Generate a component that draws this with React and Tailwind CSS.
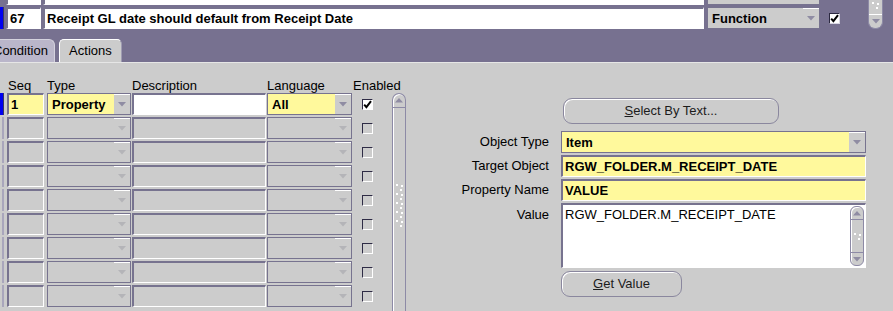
import React from 'react';

function Arrow({ light }) {
  return (
    <svg width="8" height="5" viewBox="0 0 8 5">
      <polygon points="0,0 8,0 4,4.5" fill={light ? '#b4b4b8' : '#8f8ca3'} />
    </svg>
  );
}

function Check() {
  return (
    <svg width="9" height="9" viewBox="0 0 9 9">
      <path d="M1.2 4.6 L3.4 7.2 L8 1.2" stroke="#000" strokeWidth="2" fill="none" />
    </svg>
  );
}

function TextField({ w, tone = 'gray', bold, children }) {
  const bg = tone === 'yellow' ? 'bg-[#fff99c]' : tone === 'white' ? 'bg-white' : 'bg-[#cccccc]';
  return (
    <div
      className={`${w} ${bg} h-[22px] shrink-0 border-t-2 border-l-2 border-b border-r border-t-[#77738f] border-l-[#77738f] border-b-white border-r-white flex items-center pl-[2px] text-[13px] leading-none text-black overflow-hidden whitespace-nowrap ${bold ? 'font-bold' : ''}`}
    >
      {children}
    </div>
  );
}

function Dropdown({ w, tone = 'gray', bold, children, light }) {
  const bg = tone === 'yellow' ? 'bg-[#fff99c]' : 'bg-[#cccccc]';
  return (
    <div
      className={`${w} h-[22px] shrink-0 flex border border-[#77738f] shadow-[inset_1px_1px_0_#ffffff] bg-[#cccccc] overflow-hidden`}
    >
      <div className={`flex-1 ${bg} flex items-center pl-[4px] text-[13px] leading-none text-black whitespace-nowrap ${bold ? 'font-bold' : ''}`}>
        {children}
      </div>
      <div className="w-[16px] flex items-center justify-center">
        <Arrow light={light} />
      </div>
    </div>
  );
}

function CheckBox({ checked, onPurple }) {
  return (
    <div
      className={`w-[11px] h-[11px] shrink-0 flex items-center justify-center border-t border-l border-b border-r ${
        onPurple
          ? 'border-t-[#2b2840] border-l-[#2b2840] border-b-[#d8d6e2] border-r-[#d8d6e2] bg-white'
          : 'border-t-[#2e2b45] border-l-[#2e2b45] border-b-white border-r-white ' + (checked ? 'bg-white' : 'bg-[#cccccc]')
      }`}
    >
      {checked && <Check />}
    </div>
  );
}

function GripDots({ count }) {
  return (
    <div className="flex flex-col gap-[2px] items-center">
      {Array.from({ length: count }).map((_, i) => (
        <div key={i} className="flex gap-[3px]">
          <div className={`w-[2px] h-[2px] bg-white ${i % 2 ? 'ml-[3px]' : ''}`} />
          {i % 2 === 0 && <div className="w-[2px] h-[2px] bg-white mt-[1px]" />}
        </div>
      ))}
    </div>
  );
}

function Button({ w, children }) {
  return (
    <div
      className={`${w} h-[26px] rounded-[9px] border border-[#8a879e] shadow-[inset_1px_1px_0_#ffffff] bg-[#cccccc] flex items-center justify-center text-[13px] text-[#1c1c1c]`}
    >
      {children}
    </div>
  );
}

const emptyRows = Array.from({ length: 8 });

export default function App() {
  return (
    <div
      className="w-[893px] h-[311px] overflow-hidden bg-[#cccccc] select-none"
      style={{ fontFamily: '"Liberation Sans", Arial, sans-serif' }}
    >
      {/* header block: rule rows + tabs */}
      <div className="h-[62px] bg-[#777190] flex flex-col">
        <div className="h-[30px] flex overflow-hidden">
          <div className="w-[840px] flex flex-col gap-[2px] -mt-[17px]">
            {/* previous row, scrolled off */}
            <div className="flex items-center h-[22px]">
              <div className="w-[4px] h-[22px]" />
              <div className="ml-[2px]"><TextField w="w-[35px]" tone="white" /></div>
              <div className="ml-[2px]"><TextField w="w-[661px]" tone="white" /></div>
              <div className="ml-[3px]"><Dropdown w="w-[113px]" /></div>
            </div>
            <div className="flex items-center h-[22px]">
              <div className="w-[4px] h-[22px] bg-[#0000f0] border-r border-[#3a3660]" />
              <div className="ml-[2px]"><TextField w="w-[35px]" tone="white" bold>67</TextField></div>
              <div className="ml-[2px]">
                <TextField w="w-[661px]" tone="white" bold>Receipt GL date should default from Receipt Date</TextField>
              </div>
              <div className="ml-[3px]"><Dropdown w="w-[113px]" bold>Function</Dropdown></div>
              <div className="ml-[9px]"><CheckBox checked onPurple /></div>
            </div>
          </div>
          <div className="ml-[28px] w-[15px] h-[29px] border-l border-r border-b border-[#8d8aa6] rounded-b-[7px] bg-[#cccccc] flex flex-col">
            <div className="h-[14px] flex items-start justify-center pt-[2px]">
              <GripDots count={2} />
            </div>
            <div className="flex-1 border-t border-white flex items-center justify-center">
              <Arrow />
            </div>
          </div>
        </div>
        <div className="mt-[9px] flex items-end h-[23px]">
          <div className="-ml-[11px] h-[23px] pl-[4px] pr-[6px] bg-[#bab6ca] rounded-tr-[6px] border-t border-r border-[#d4d2de] flex items-center text-[13px] text-black">
            Condition
          </div>
          <div className="ml-[4px] h-[23px] w-[63px] bg-[#cccccc] rounded-t-[5px] border-t border-l border-white border-r border-r-[#9f9cb2] flex items-center justify-center text-[13px] text-black">
            Actions
          </div>
        </div>
      </div>

      {/* tab body */}
      <div className="h-[249px] border-t border-[#e6e6e6] flex">
        {/* actions multi-row grid */}
        <div className="w-[406px] flex flex-col pt-[16px]">
          <div className="flex h-[15px] items-center text-[13px] text-black leading-none">
            <div className="w-[4px]" />
            <div className="ml-[4px] w-[36px]">Seq</div>
            <div className="ml-[3px] w-[84px]">Type</div>
            <div className="ml-[1px] w-[134px]">Description</div>
            <div className="ml-[1px] w-[85px]">Language</div>
            <div className="ml-[1px]">Enabled</div>
          </div>
          <div className="mt-[1px] flex flex-1">
            <div className="w-[373px] flex flex-col gap-[2px]">
              <div className="flex items-center h-[22px]">
                <div className="w-[4px] h-[22px] bg-[#0000f0] border-r border-[#3a3660]" />
                <div className="ml-[3px]"><TextField w="w-[37px]" tone="yellow" bold>1</TextField></div>
                <div className="ml-[3px]"><Dropdown w="w-[84px]" tone="yellow" bold>Property</Dropdown></div>
                <div className="ml-[1px]"><TextField w="w-[134px]" tone="white" /></div>
                <div className="ml-[1px]"><Dropdown w="w-[85px]" tone="yellow" bold>All</Dropdown></div>
                <div className="ml-[10px]"><CheckBox checked /></div>
              </div>
              {emptyRows.map((_, i) => (
                <div key={i} className="flex items-center h-[22px]">
                  <div className="w-[4px] h-[22px] border-r-2 border-[#a9a6bc]" />
                  <div className="ml-[3px]"><TextField w="w-[37px]" /></div>
                  <div className="ml-[3px]"><Dropdown w="w-[84px]" light /></div>
                  <div className="ml-[1px]"><TextField w="w-[134px]" /></div>
                  <div className="ml-[1px]"><Dropdown w="w-[85px]" light /></div>
                  <div className="ml-[10px]"><CheckBox /></div>
                </div>
              ))}
            </div>
            <div className="ml-[19px] w-[14px] h-[230px] border border-b-0 border-[#8d8aa6] rounded-t-[7px] shadow-[inset_1px_1px_0_#ffffff] flex flex-col">
              <div className="h-[14px] border-b border-[#8d8aa6] flex items-center justify-center">
                <svg width="8" height="5" viewBox="0 0 8 5">
                  <polygon points="0,4.5 8,4.5 4,0" fill="#8f8ca3" />
                </svg>
              </div>
              <div className="flex-1 flex items-center justify-center pb-[20px]">
                <GripDots count={10} />
              </div>
            </div>
          </div>
        </div>

        {/* property editor */}
        <div className="ml-[43px] flex flex-col pt-[35px]">
          <div className="ml-[114px]">
            <Button w="w-[216px]">
              <span><span className="underline">S</span>elect By Text...</span>
            </Button>
          </div>
          <div className="mt-[7px] flex flex-col gap-[2px]">
            <div className="flex items-center">
              <div className="w-[100px] text-right text-[13px] text-black">Object Type</div>
              <div className="ml-[12px]"><Dropdown w="w-[305px]" tone="yellow" bold>Item</Dropdown></div>
            </div>
            <div className="flex items-center">
              <div className="w-[100px] text-right text-[13px] text-black">Target Object</div>
              <div className="ml-[12px]"><TextField w="w-[305px]" tone="yellow" bold>RGW_FOLDER.M_RECEIPT_DATE</TextField></div>
            </div>
            <div className="flex items-center">
              <div className="w-[100px] text-right text-[13px] text-black">Property Name</div>
              <div className="ml-[12px]"><TextField w="w-[305px]" tone="yellow" bold>VALUE</TextField></div>
            </div>
            <div className="flex items-start">
              <div className="w-[100px] text-right text-[13px] text-black pt-[2px]">Value</div>
              <div className="ml-[12px] w-[305px] h-[65px] bg-white border-t-2 border-l-2 border-b border-r border-t-[#77738f] border-l-[#77738f] border-b-white border-r-white flex">
                <div className="flex-1 pl-[2px] pt-[3px] text-[13px] leading-none text-black">RGW_FOLDER.M_RECEIPT_DATE</div>
                <div className="w-[14px] mr-[1px] my-[1px] border border-[#8d8aa6] rounded-[6px] bg-[#cccccc] shadow-[inset_1px_1px_0_#ffffff] flex flex-col">
                  <div className="h-[13px] border-b border-[#8d8aa6] flex items-center justify-center">
                    <svg width="8" height="5" viewBox="0 0 8 5">
                      <polygon points="0,4.5 8,4.5 4,0" fill="#8f8ca3" />
                    </svg>
                  </div>
                  <div className="flex-1 flex items-center justify-center">
                    <GripDots count={2} />
                  </div>
                  <div className="h-[13px] border-t border-[#8d8aa6] flex items-center justify-center">
                    <Arrow />
                  </div>
                </div>
              </div>
            </div>
          </div>
          <div className="mt-[3px] ml-[112px]">
            <Button w="w-[121px]">
              <span><span className="underline">G</span>et Value</span>
            </Button>
          </div>
        </div>
      </div>
    </div>
  );
}
